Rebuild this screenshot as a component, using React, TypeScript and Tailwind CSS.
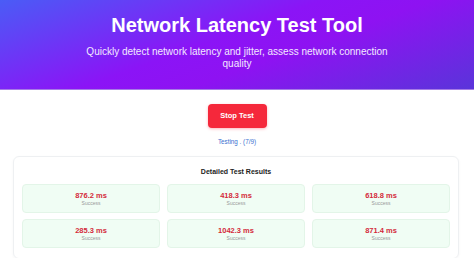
const results = [
  { ms: "876.2 ms", status: "Success" },
  { ms: "418.3 ms", status: "Success" },
  { ms: "618.8 ms", status: "Success" },
  { ms: "285.3 ms", status: "Success" },
  { ms: "1042.3 ms", status: "Success" },
  { ms: "871.4 ms", status: "Success" },
];

export default function App() {
  return (
    <div className="min-h-screen bg-white font-['Liberation_Sans',Arial,sans-serif]">
      <header className="h-[90px] bg-[linear-gradient(160deg,#4a5cf6_0%,#8b14f6_45%,#8e12f2_60%,#5a34da_100%)] border-b border-[#a67be6] flex flex-col items-center pt-[12px] text-white">
        <h1 className="text-[20px] font-bold leading-[26px]">Network Latency Test Tool</h1>
        <p className="mt-[8px] text-[10px] leading-[12px] text-center max-w-[310px] text-[#f3e9ff]">
          Quickly detect network latency and jitter, assess network connection quality
        </p>
      </header>

      <div className="flex flex-col items-center pt-[14px]">
        <button className="w-[59px] h-[24px] rounded-[4px] bg-[#f5283b] text-white text-[7.5px] font-bold shadow-[0_1px_3px_rgba(245,40,59,0.35)]">
          Stop Test
        </button>
        <div className="mt-[10px] text-[6.3px] leading-[8px] text-[#3a6fd0]">Testing . (7/9)</div>
      </div>

      <section className="ml-[13px] mr-[15px] mt-[10px] rounded-[6px] border border-[#eef0f2] px-[8px] pt-[10px] pb-[10px] shadow-[0_1px_3px_rgba(0,0,0,0.04)]">
        <h2 className="text-center text-[7px] font-bold leading-[10px] text-[#222]">Detailed Test Results</h2>
        <div className="mt-[7px] grid grid-cols-3 gap-x-[7px] gap-y-[6px]">
          {results.map((r, i) => (
            <div
              key={i}
              className="h-[29px] rounded-[4px] border border-[#e3f5e8] bg-[#f0fdf4] flex flex-col items-center justify-center"
            >
              <div className="text-[7.5px] font-bold leading-[9px] text-[#d42a3a]">{r.ms}</div>
              <div className="text-[5px] leading-[7px] text-[#999]">{r.status}</div>
            </div>
          ))}
        </div>
      </section>
    </div>
  );
}
